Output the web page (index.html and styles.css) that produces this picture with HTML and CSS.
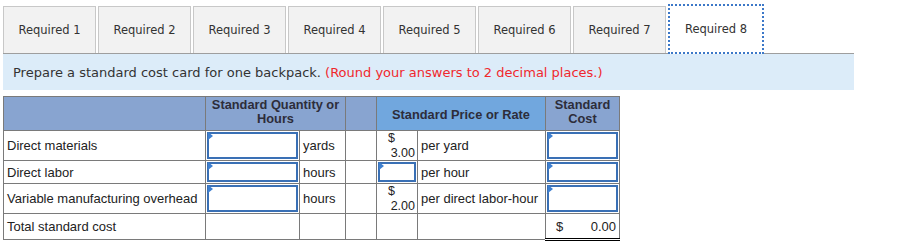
FILE: index.html
```html
<!DOCTYPE html>
<html>
<head>
<meta charset="utf-8">
<link rel="stylesheet" href="styles.css">
</head>
<body>
<div class="page">
  <div class="tabs">
    <div class="tab">Required 1</div>
    <div class="tab">Required 2</div>
    <div class="tab">Required 3</div>
    <div class="tab">Required 4</div>
    <div class="tab">Required 5</div>
    <div class="tab">Required 6</div>
    <div class="tab">Required 7</div>
    <div class="tab active">Required 8</div>
  </div>
  <div class="instr">Prepare a standard cost card for one backpack. <span class="red">(Round your answers to 2 decimal places.)</span></div>
  <table class="card">
    <colgroup>
      <col class="c-label"><col class="c-qty"><col class="c-unit"><col class="c-gap"><col class="c-price"><col class="c-per"><col class="c-cost">
    </colgroup>
    <tr class="head">
      <th></th>
      <th colspan="2">Standard Quantity or<br>Hours</th>
      <th></th>
      <th colspan="2" class="light">Standard Price or Rate</th>
      <th>Standard<br>Cost</th>
    </tr>
    <tr class="r-tall">
      <td class="lbl">Direct materials</td>
      <td class="in"><div class="box"></div></td>
      <td class="unit">yards</td>
      <td></td>
      <td class="price"><div>$</div><div>3.00</div></td>
      <td class="per">per yard</td>
      <td class="in"><div class="box"></div></td>
    </tr>
    <tr class="r-short">
      <td class="lbl">Direct labor</td>
      <td class="in"><div class="box"></div></td>
      <td class="unit">hours</td>
      <td></td>
      <td class="in"><div class="box"></div></td>
      <td class="per">per hour</td>
      <td class="in"><div class="box"></div></td>
    </tr>
    <tr class="r-tall">
      <td class="lbl">Variable manufacturing overhead</td>
      <td class="in"><div class="box"></div></td>
      <td class="unit">hours</td>
      <td></td>
      <td class="price"><div>$</div><div>2.00</div></td>
      <td class="per">per direct labor-hour</td>
      <td class="in"><div class="box"></div></td>
    </tr>
    <tr class="r-total">
      <td class="lbl">Total standard cost</td>
      <td></td>
      <td></td>
      <td></td>
      <td></td>
      <td></td>
      <td class="total"><span>$</span><span>0.00</span></td>
    </tr>
  </table>
</div>
</body>
</html>
```
FILE: styles.css
```css
html, body {
  margin: 0;
  padding: 0;
  background: #fff;
}
.page {
  padding: 6px 0 0 3px;
  width: 851px;
}
.tabs {
  display: flex;
  gap: 2px;
  height: 47px;
  border-bottom: 1px solid #9e9e9e;
}
.tab {
  width: 93px;
  box-sizing: border-box;
  height: 47px;
  border: 1px solid #c8c8c8;
  border-bottom: none;
  background: #f2f2f2;
  font-family: "DejaVu Sans", Verdana, sans-serif;
  font-size: 11.5px;
  color: #333;
  display: flex;
  align-items: center;
  justify-content: center;
}
.tab.active {
  background: #fff;
  border: 2px dotted #3c78c8;
  height: 50px;
  margin-top: -2px;
  margin-bottom: -1px;
  width: 96px;
  position: relative;
  z-index: 1;
}
.instr {
  background: #dcecf9;
  height: 36px;
  line-height: 38px;
  padding-left: 10px;
  font-family: "DejaVu Sans", Verdana, sans-serif;
  font-size: 13px;
  color: #333;
}
.red { color: #f0282d; }
.card {
  margin-top: 6px;
  border-collapse: collapse;
  font-family: "Liberation Sans", Arial, sans-serif;
  font-size: 13px;
  color: #222;
  table-layout: fixed;
  width: 617px;
}
.c-label { width: 202px; }
.c-qty { width: 94px; }
.c-unit { width: 46px; }
.c-gap { width: 31px; }
.c-price { width: 41px; }
.c-per { width: 128px; }
.c-cost { width: 74px; }
.card td, .card th {
  border: 1px solid #7a7a7a;
  padding: 0;
}
.card th {
  background: #88a4d0;
  color: #2d2d3a;
  font-weight: bold;
  font-size: 12.8px;
  line-height: 14px;
  height: 31px;
  vertical-align: top;
  padding-top: 1px;
}
.card th.light {
  background: #71a7de;
  vertical-align: middle;
  padding-top: 2px;
}
.r-tall td { height: 29px; }
.r-short td { height: 22px; }
.r-total td { height: 24px; }
.lbl { padding-left: 3px !important; }
.unit { padding-left: 3px !important; }
.per { padding-left: 3px !important; }
.price {
  text-align: right;
  padding-right: 2px !important;
  font-size: 12.5px;
  line-height: 14.5px;
}
.price div:first-child {
  text-align: left;
  padding-left: 11px;
}
.in { position: relative; }
.box {
  position: absolute;
  left: 1px; right: 1px; top: 1px; bottom: 1px;
  border: 2px solid #3a70b5;
  background: #fff;
}
.box::before {
  content: "";
  position: absolute;
  left: -1px; top: -1px;
  border-top: 4px solid transparent;
  border-bottom: 4px solid transparent;
  border-left: 5px solid #3d7fd0;
  transform: translateY(-1px);
}
.total {
  border-bottom: 3px double #000 !important;
  padding: 0 3px 0 10px !important;
}
.total span:first-child { float: left; }
.total span:last-child { float: right; }
```
